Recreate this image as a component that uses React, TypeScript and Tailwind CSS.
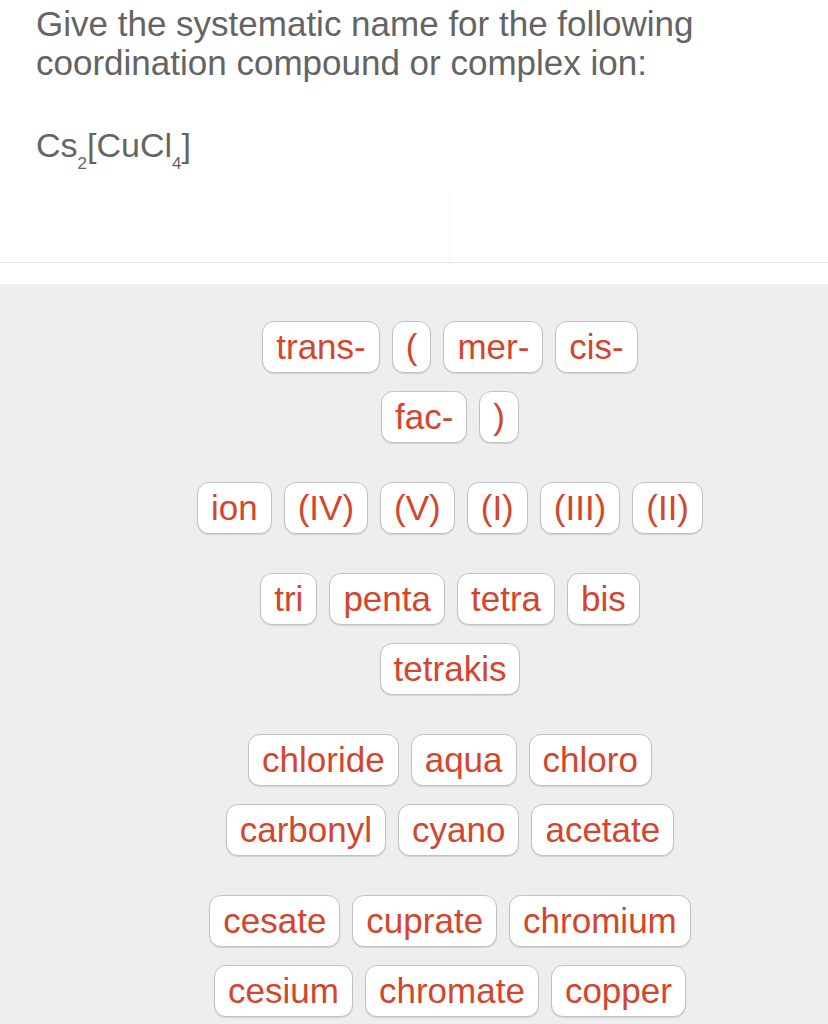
const groups: string[][][] = [
  [
    ['trans-', '(', 'mer-', 'cis-'],
    ['fac-', ')'],
  ],
  [['ion', '(IV)', '(V)', '(I)', '(III)', '(II)']],
  [['tri', 'penta', 'tetra', 'bis'], ['tetrakis']],
  [
    ['chloride', 'aqua', 'chloro'],
    ['carbonyl', 'cyano', 'acetate'],
  ],
  [
    ['cesate', 'cuprate', 'chromium'],
    ['cesium', 'chromate', 'copper'],
  ],
];

function Chip({ label }: { label: string }) {
  return (
    <button className="h-[52px] px-[13px] rounded-[12px] bg-white border border-[#c2c2c2] shadow-[0_1px_1px_rgba(0,0,0,0.12)] text-[35px] leading-[50px] text-[#d4452d] whitespace-nowrap">
      {label}
    </button>
  );
}

export default function App() {
  return (
    <div className="min-h-screen bg-white font-['Liberation_Sans',Arial,sans-serif]">
      {/* Question */}
      <div className="pt-[4px] px-[36px] text-[#646464]">
        <h1 className="text-[35px] leading-[39px] font-normal">
          Give the systematic name for the following
          <br />
          coordination compound or complex ion:
        </h1>
        <p className="mt-[43px] h-[40px] text-[34px] leading-[40px]">
          Cs<span className="text-[17px] leading-none align-[-12px]">2</span>[CuCl
          <span className="text-[17px] leading-none align-[-12px]">4</span>]
        </p>
      </div>

      {/* Answer field */}
      <div className="h-[31px]" />
      <div className="border-b border-[#e4e4e4]">
        <div className="h-[66px] ml-[449px] border-l border-[#f3f4f8]" />
      </div>
      <div className="h-[21px]" />

      {/* Word bank */}
      <div className="bg-[#eeeeee] pl-[72px] pt-[37px] pb-[10px] flex flex-col gap-[39px]">
        {groups.map((rows, gi) => (
          <div key={gi} className="flex flex-col gap-[18px]">
            {rows.map((row, ri) => (
              <div key={ri} className="flex justify-center gap-3">
                {row.map((w) => (
                  <Chip key={w} label={w} />
                ))}
              </div>
            ))}
          </div>
        ))}
      </div>
    </div>
  );
}
